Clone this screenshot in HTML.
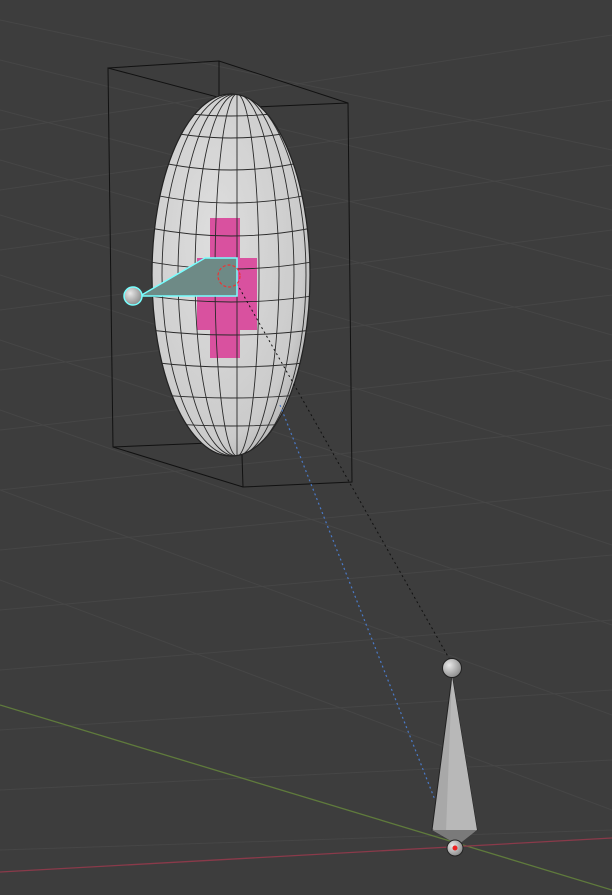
<!DOCTYPE html>
<html><head><style>html,body{margin:0;padding:0;background:#3d3d3d;}svg{display:block}</style></head><body>
<svg width="612" height="895" viewBox="0 0 612 895" xmlns="http://www.w3.org/2000/svg">
<defs>
<radialGradient id="eg" cx="0.4" cy="0.4" r="0.7">
<stop offset="0" stop-color="#dedede"/><stop offset="0.8" stop-color="#cbcbcb"/><stop offset="1" stop-color="#adadad"/>
</radialGradient>
<radialGradient id="bg" cx="0.35" cy="0.35" r="0.7"><stop offset="0" stop-color="#e8e8e8"/><stop offset="1" stop-color="#8a8a8a"/></radialGradient>
<clipPath id="ec"><ellipse cx="231" cy="275" rx="79" ry="181"/></clipPath>
</defs>
<rect width="612" height="895" fill="#3d3d3d"/>
<g stroke="#464646" stroke-width="1">
<line x1="0" y1="20" x2="612" y2="150"/><line x1="0" y1="60" x2="612" y2="210"/>
<line x1="0" y1="110" x2="612" y2="270"/><line x1="0" y1="160" x2="612" y2="335"/>
<line x1="0" y1="215" x2="612" y2="400"/><line x1="0" y1="275" x2="612" y2="470"/>
<line x1="0" y1="340" x2="612" y2="545"/><line x1="0" y1="410" x2="612" y2="625"/>
<line x1="0" y1="490" x2="612" y2="715"/><line x1="0" y1="580" x2="612" y2="810"/>
<line x1="0" y1="790" x2="612" y2="760"/><line x1="0" y1="730" x2="612" y2="690"/>
<line x1="0" y1="670" x2="612" y2="620"/><line x1="0" y1="610" x2="612" y2="555"/>
<line x1="0" y1="550" x2="612" y2="490"/><line x1="0" y1="490" x2="612" y2="425"/>
<line x1="0" y1="430" x2="612" y2="360"/><line x1="0" y1="370" x2="612" y2="295"/>
<line x1="0" y1="310" x2="612" y2="230"/><line x1="0" y1="250" x2="612" y2="165"/>
<line x1="0" y1="190" x2="612" y2="100"/><line x1="0" y1="130" x2="612" y2="35"/>
<line x1="0" y1="850" x2="612" y2="830"/>
</g>
<line x1="0" y1="705" x2="612" y2="890" stroke="#5f7a3c" stroke-width="1.3"/>
<line x1="0" y1="872" x2="612" y2="838" stroke="#8a3a4a" stroke-width="1.3"/>
<g stroke="#111" stroke-width="1" fill="none">
<polyline points="108,68 219,61 348,103 352,482 243,487 113,447 108,68 255,107 348,103"/>
<line x1="113" y1="447" x2="210" y2="443"/>
<line x1="243" y1="487" x2="242" y2="455"/>
<line x1="219" y1="61" x2="219" y2="96"/>
</g>
<ellipse cx="231" cy="275" rx="79" ry="181" fill="url(#eg)" stroke="#222" stroke-width="1.2"/>
<g clip-path="url(#ec)">
<rect x="210" y="218" width="30" height="140" fill="#d9519f"/>
<rect x="197" y="258" width="60" height="72" fill="#d9519f"/>
<g stroke="#2a2a2a" stroke-width="0.9" fill="none">
<ellipse cx="234" cy="275" rx="72" ry="181"/><ellipse cx="236" cy="275" rx="58" ry="181"/>
<ellipse cx="237" cy="275" rx="42" ry="181"/><ellipse cx="237" cy="275" rx="22" ry="181"/>
<line x1="237" y1="94" x2="237" y2="456"/>
<path d="M150,128 Q231,148 312,128"/><path d="M150,160 Q231,180 312,160"/>
<path d="M150,194 Q231,212 312,194"/><path d="M150,228 Q231,244 312,228"/>
<path d="M150,262 Q231,276 312,262"/><path d="M150,296 Q231,308 312,296"/>
<path d="M150,330 Q231,340 312,330"/><path d="M150,362 Q231,372 312,362"/>
<path d="M150,394 Q231,402 312,394"/><path d="M150,422 Q231,430 312,422"/>
<path d="M150,108 Q231,124 312,108"/>
</g>
</g>
<line x1="232" y1="275" x2="450" y2="660" stroke="#111" stroke-width="1" stroke-dasharray="2,3"/>
<line x1="280" y1="405" x2="435" y2="800" stroke="#4a7ac8" stroke-width="1.2" stroke-dasharray="2,3"/>
<polygon points="140,296 205,258 237,258 237,296" fill="#6e8a86" stroke="#7ff" stroke-width="1.5"/>
<circle cx="229" cy="276" r="11" fill="none" stroke="#e33" stroke-width="1.2" stroke-dasharray="3,2"/>
<circle cx="133" cy="296" r="9" fill="url(#bg)" stroke="#7ff" stroke-width="1.5"/>
<polygon points="452,676 477,830 463,838 432,830" fill="#a8a8a8" stroke="#222" stroke-width="1"/>
<polygon points="452,676 477,830 463,838 446,832" fill="#b8b8b8"/>
<polygon points="432,830 477,830 458,845" fill="#7a7a7a"/>
<circle cx="452" cy="668" r="9.5" fill="url(#bg)" stroke="#222"/>
<circle cx="455" cy="848" r="8" fill="url(#bg)" stroke="#222"/>
<circle cx="455" cy="848" r="2.5" fill="#e22"/>
</svg>
</body></html>
